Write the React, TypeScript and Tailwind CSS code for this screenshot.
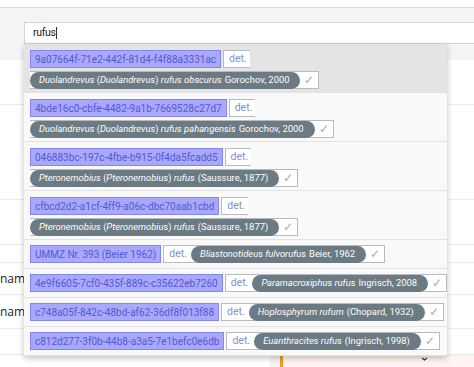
import React from 'react';

type Hit = {
  id: string;
  name: React.ReactNode;
  author: string;
  wrap: boolean;
};

const hits: Hit[] = [
  {
    id: '9a07664f-71e2-442f-81d4-f4f88a3331ac',
    name: <><i>Duolandrevus</i> (<i>Duolandrevus</i>) <i>rufus obscurus</i></>,
    author: 'Gorochov, 2000',
    wrap: true,
  },
  {
    id: '4bde16c0-cbfe-4482-9a1b-7669528c27d7',
    name: <><i>Duolandrevus</i> (<i>Duolandrevus</i>) <i>rufus pahangensis</i></>,
    author: 'Gorochov, 2000',
    wrap: true,
  },
  {
    id: '046883bc-197c-4fbe-b915-0f4da5fcadd5',
    name: <><i>Pteronemobius</i> (<i>Pteronemobius</i>) <i>rufus</i></>,
    author: '(Saussure, 1877)',
    wrap: true,
  },
  {
    id: 'cfbcd2d2-a1cf-4ff9-a06c-dbc70aab1cbd',
    name: <><i>Pteronemobius</i> (<i>Pteronemobius</i>) <i>rufus</i></>,
    author: '(Saussure, 1877)',
    wrap: true,
  },
  {
    id: 'UMMZ Nr. 393 (Beier 1962)',
    name: <i>Bliastonotideus fulvorufus</i>,
    author: 'Beier, 1962',
    wrap: false,
  },
  {
    id: '4e9f6605-7cf0-435f-889c-c35622eb7260',
    name: <i>Paramacroxiphus rufus</i>,
    author: 'Ingrisch, 2008',
    wrap: false,
  },
  {
    id: 'c748a05f-842c-48bd-af62-36df8f013f88',
    name: <i>Hoplosphyrum rufum</i>,
    author: '(Chopard, 1932)',
    wrap: false,
  },
  {
    id: 'c812d277-3f0b-44b8-a3a5-7e1befc0e6db',
    name: <i>Euanthracites rufus</i>,
    author: '(Ingrisch, 1998)',
    wrap: false,
  },
];

const Chip = ({ text }: { text: string }) => (
  <span className="inline-flex items-center h-[18px] px-[4px] bg-[#a9a9fb] border border-[#8585ee] text-[#5656d8] text-[10px] whitespace-nowrap">
    {text}
  </span>
);

const Pill = ({ hit }: { hit: Hit }) => (
  <span className="inline-flex items-center h-[17px] pl-[9px] pr-[11px] rounded-full bg-[#6b7a83] text-white text-[9.4px] whitespace-nowrap">
    <span>{hit.name}</span>
    <span className="ml-[3px]">{hit.author}</span>
  </span>
);

const Check = () => <span className="px-[4px] text-[#a3b0b8] text-[12px] leading-none">✓</span>;

const Item = ({ hit, active }: { hit: Hit; active: boolean }) => (
  <div
    className={`px-[6px] border-b border-[#e3e3e6] ${active ? 'bg-[#e4e4e4]' : 'bg-[#f9f9fa]'} ${
      hit.wrap ? 'pt-[6px] pb-[3px]' : 'pt-[5px] pb-[5px]'
    }`}
  >
    {hit.wrap ? (
      <>
        <div className="flex items-center">
          <Chip text={hit.id} />
          <span className="ml-[2px] h-[18px] inline-flex items-center pl-[5px] pr-[3px] bg-white border-y border-l border-[#b9b9c0] text-[#7f93d3] text-[10.5px]">
            det.
          </span>
        </div>
        <div className="flex mt-[3px]">
          <span className="inline-flex items-center h-[18px] bg-white border-y border-r border-[#b9b9c0]">
            <Pill hit={hit} />
            <Check />
          </span>
        </div>
      </>
    ) : (
      <div className="flex items-center">
        <Chip text={hit.id} />
        <span className="ml-[2px] h-[18px] inline-flex items-center pl-[5px] bg-white border border-[#b9b9c0] text-[#7f93d3] text-[10.5px]">
          <span className="mr-[4px]">det.</span>
          <Pill hit={hit} />
          <Check />
        </span>
      </div>
    )}
  </div>
);

export default function App() {
  return (
    <div className="relative w-[474px] h-[367px] overflow-hidden bg-white font-['Roboto',sans-serif] text-[10px]">
      {/* page behind the dropdown */}
      <div className="h-[8px] border-b border-[#dcdce0]" />
      <div className="h-[52px] bg-[#f5f5f8] pt-[14px] pl-[24px]">
        <div className="h-[22px] w-[470px] bg-white border border-[#d4d4d8] flex items-center pl-[8px] text-[10.5px] tracking-[-0.3px] text-[#222]">
          rufus<span className="w-px h-[12px] bg-[#333]" />
        </div>
      </div>
      <div className="h-[45px] border-b border-[#ececef]" />
      <div className="h-[95px] border-b border-[#ececef]" />
      <div className="h-[45px] border-b border-[#ececef]" />
      <div className="h-[18px] border-b border-[#ececef]" />
      <div className="h-[32px] border-b border-[#ececef] flex items-center text-[12px] text-[#222] font-['Open_Sans',sans-serif]">
        <span>name</span>
      </div>
      <div className="h-[34px] border-b border-[#ececef] flex items-center text-[12px] text-[#222] font-['Open_Sans',sans-serif]">
        <span>name</span>
      </div>
      <div className="h-[26px] border-b border-[#ececef]" />
      <div className="flex h-[14px]">
        <div className="w-[270px]" />
        <div className="w-[10px] bg-[#f4f4f6]" />
        <div className="w-[3px] bg-[#f39a2b]" />
        <div className="flex-1 bg-[#fdf4f1] relative">
          <svg className="absolute left-[138px] top-[2px]" width="7" height="4" viewBox="0 0 7 4">
            <path d="M1 1l2.5 2L6 1" fill="none" stroke="#333" strokeWidth="1.2" />
          </svg>
        </div>
      </div>

      {/* autocomplete dropdown */}
      <div className="absolute left-[24px] top-[44px] w-[423px] bg-white shadow-[0_2px_6px_rgba(0,0,0,0.25)]">
        {hits.map((h, i) => (
          <Item key={h.id} hit={h} active={i === 0} />
        ))}
      </div>
    </div>
  );
}
